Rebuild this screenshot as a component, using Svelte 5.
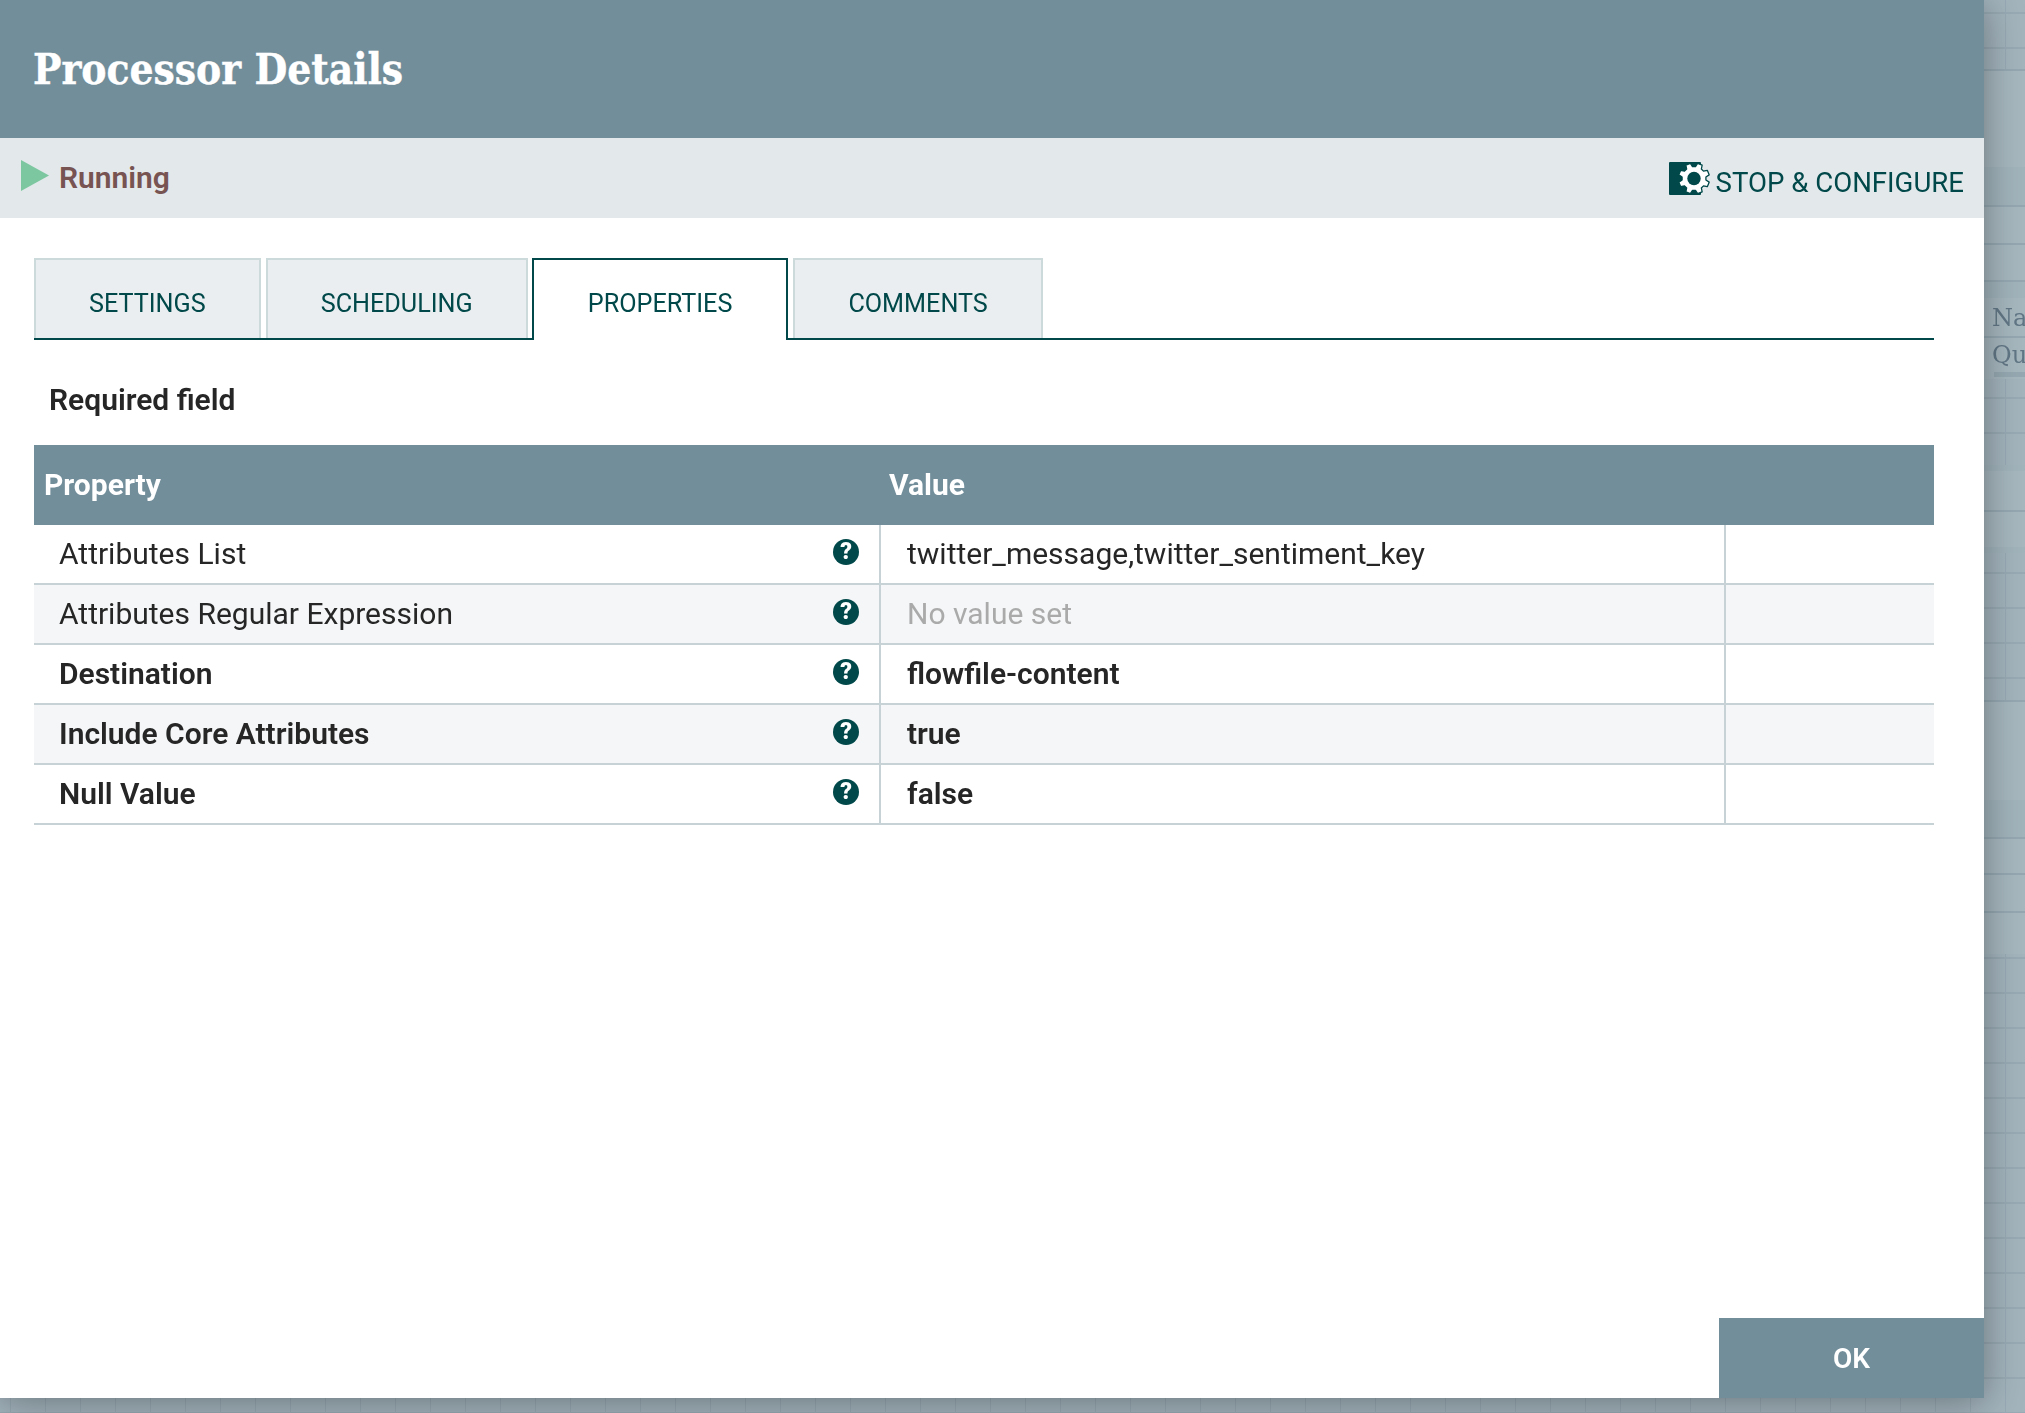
<script>
  // canvas nodes behind the dialog: only a sliver of each shows at the right edge
  const nodes = [
    { top: 69, height: 310, rows: [0, 136, 174, 211, 267], bands: [{ top: 98, height: 38 }, { top: 211, height: 18 }] },
    { top: 465, height: 88, rows: [45], bands: [{ top: 0, height: 6 }, { top: 82, height: 6 }] },
    { top: 700, height: 254, rows: [0, 137, 173, 211], bands: [{ top: 100, height: 37 }] },
  ]

  const tabs = [
    { label: 'SETTINGS' },
    { label: 'SCHEDULING' },
    { label: 'PROPERTIES', active: true },
    { label: 'COMMENTS' },
  ]

  const properties = [
    { name: 'Attributes List', value: 'twitter_message,twitter_sentiment_key' },
    { name: 'Attributes Regular Expression', value: 'No value set', unset: true },
    { name: 'Destination', value: 'flowfile-content', required: true },
    { name: 'Include Core Attributes', value: 'true', required: true },
    { name: 'Null Value', value: 'false', required: true },
  ]

  function gearPath(cx, cy, outer, inner, teeth) {
    const step = (Math.PI * 2) / teeth
    const pts = []
    for (let i = 0; i < teeth; i++) {
      const a = i * step + step / 2
      pts.push([a - step * 0.34, inner], [a - step * 0.2, outer], [a + step * 0.2, outer], [a + step * 0.34, inner])
    }
    return 'M' + pts.map(([a, r]) => `${(cx + Math.cos(a) * r).toFixed(2)} ${(cy + Math.sin(a) * r).toFixed(2)}`).join('L') + 'Z'
  }
</script>

<div class="canvas">
  {#each nodes as node}
    <div class="node" style="top: {node.top}px; height: {node.height}px">
      {#each node.bands as band}
        <div class="band" style="top: {band.top}px; height: {band.height}px"></div>
      {/each}
      {#each node.rows as y}
        <div class="rule" style="top: {y}px"></div>
      {/each}
    </div>
  {/each}
  <div class="node-text name">Name</div>
  <div class="node-text queue">Queued</div>
  <div class="node-bar"></div>
</div>

<div class="dialog">
  <header class="title">Processor Details</header>

  <div class="status">
    <div class="state">
      <svg class="play" viewBox="0 0 28 31" width="28" height="31" aria-hidden="true">
        <path d="M0 0L28 15.5L0 31Z" />
      </svg>
      <span>Running</span>
    </div>
    <div class="stop">
      <svg class="stop-icon" viewBox="0 0 42 34" width="42" height="34" aria-hidden="true">
        <rect x="0" y="0" width="32" height="33" rx="1" fill="#004849" />
        <path d={gearPath(25, 16.5, 15.6, 12, 8)} fill="#fff" stroke="#004849" stroke-width="1.3" stroke-linejoin="round" />
        <circle cx="25" cy="16.5" r="6.7" fill="#004849" />
      </svg>
      <span class="stop-label">STOP &amp; CONFIGURE</span>
    </div>
  </div>

  <div class="body">
    <nav class="tabs">
      {#each tabs as tab}
        <div class="tab" class:active={tab.active}>{tab.label}</div>
      {/each}
    </nav>

    <div class="required">Required field</div>

    <div class="table">
      <div class="thead">
        <div>Property</div>
        <div>Value</div>
        <div></div>
      </div>
      {#each properties as prop}
        <div class="row" class:required-row={prop.required}>
          <div class="cell name-cell">
            <span>{prop.name}</span>
            <span class="help">?</span>
          </div>
          <div class="cell value-cell" class:unset={prop.unset}>{prop.value}</div>
          <div class="cell"></div>
        </div>
      {/each}
    </div>
  </div>

  <footer class="footer">
    <div class="ok">OK</div>
  </footer>
</div>

<style>
  :global(body) {
    margin: 0;
    background: #a3b4bd;
    font-family: Roboto, "Liberation Sans", sans-serif;
    overflow: hidden;
  }

  .canvas {
    position: fixed;
    inset: 0;
    background-color: #a3b4bd;
    background-image:
      repeating-linear-gradient(90deg, transparent 0 34px, #98aab4 34px 36px),
      repeating-linear-gradient(0deg, transparent 0 33px, #98aab4 33px 35px);
    background-size: 35px 100%, 100% 35px;
    background-repeat: repeat;
    background-position: 11px 0, 0 12px;
  }

  .node {
    position: absolute;
    left: 1900px;
    right: 0;
    background: #a6b7be;
  }

  .band {
    position: absolute;
    left: 0;
    right: 0;
    background: #a1b3bb;
  }

  .rule {
    position: absolute;
    left: 0;
    right: 0;
    height: 2px;
    background: #95a8b2;
  }

  .node-text {
    position: absolute;
    left: 1992px;
    font-family: "DejaVu Serif", serif;
    font-size: 24px;
    line-height: 30px;
    color: #627786;
    white-space: nowrap;
  }

  .name { top: 303px; }
  .queue { top: 340px; }

  .node-bar {
    position: absolute;
    left: 1994px;
    right: 0;
    top: 372px;
    height: 5px;
    background: #96a9b2;
  }

  .dialog {
    position: absolute;
    top: 0;
    left: 0;
    width: 1984px;
    height: 1398px;
    background: #fff;
    display: flex;
    flex-direction: column;
    box-shadow: 0 4px 36px rgba(0, 0, 0, 0.36);
  }

  .title {
    height: 138px;
    flex: none;
    background: #728e9b;
    color: #fff;
    display: flex;
    align-items: center;
    padding-left: 33px;
    font-family: "DejaVu Serif Condensed", "DejaVu Serif", serif;
    font-weight: 700;
    font-size: 42px;
    -webkit-text-stroke: 0.4px #fff;
  }

  .status {
    height: 80px;
    flex: none;
    background: #e3e8eb;
    display: flex;
    justify-content: space-between;
    align-items: flex-start;
    padding: 0 20px 0 21px;
  }

  .state {
    display: flex;
    align-items: flex-start;
    gap: 10px;
    padding-top: 22px;
    color: #775351;
    font-size: 30px;
    font-weight: 600;
    line-height: 36px;
  }

  .play {
    fill: #7dc7a0;
  }

  .stop {
    display: flex;
    align-items: flex-start;
    gap: 5px;
    padding-top: 24px;
    color: #004849;
    font-size: 27.6px;
    line-height: 36px;
  }

  .stop-label {
    margin-top: 3px;
  }

  .body {
    flex: 1;
    padding: 40px 50px 0 34px;
    min-height: 0;
  }

  .tabs {
    display: flex;
    gap: 5px;
    height: 82px;
    box-sizing: border-box;
    border-bottom: 2px solid #004849;
  }

  .tab {
    height: 80px;
    box-sizing: border-box;
    padding: 8px 53px 0;
    display: flex;
    align-items: center;
    background: #eaeef0;
    border: 2px solid #ccdadb;
    border-bottom: 0;
    color: #004849;
    font-size: 25.2px;
  }

  .tab.active {
    height: 82px;
    margin-left: -1px;
    padding: 8px 54px 2px;
    background: #fff;
    border-color: #004849;
  }

  .required {
    margin: 41px 0 0 15px;
    height: 37px;
    line-height: 37px;
    color: #262626;
    font-size: 30px;
    font-weight: 600;
  }

  .table {
    margin-top: 27px;
  }

  .thead,
  .row {
    display: grid;
    grid-template-columns: 847px 845px 1fr;
  }

  .thead {
    height: 80px;
    align-items: center;
    background: #728e9b;
    color: #fff;
    font-size: 30px;
    font-weight: 700;
  }

  .thead > div {
    padding-left: 10px;
    padding-bottom: 2px;
  }

  .thead > div:nth-child(2) {
    padding-left: 8px;
  }

  .row {
    height: 60px;
    box-sizing: border-box;
    border-bottom: 2px solid #c7d2d7;
    color: #262626;
    font-size: 30px;
  }

  .row:nth-child(odd) {
    background: #f4f6f7;
  }

  .required-row {
    font-weight: 600;
  }

  .cell {
    display: flex;
    align-items: center;
    box-sizing: border-box;
    padding-bottom: 2px;
  }

  .cell:not(:last-child) {
    border-right: 2px solid #c7d2d7;
  }

  .name-cell {
    justify-content: space-between;
    padding-left: 25px;
    padding-right: 20px;
  }

  .value-cell {
    padding-left: 26px;
  }

  .value-cell.unset {
    color: #aaa;
  }

  .help {
    width: 26px;
    height: 26px;
    margin-top: -3px;
    border-radius: 50%;
    background: #004849;
    color: #fff;
    font-size: 23px;
    font-weight: 900;
    line-height: 26px;
    text-align: center;
  }

  .footer {
    flex: none;
    display: flex;
    justify-content: flex-end;
  }

  .ok {
    width: 265px;
    height: 80px;
    background: #728e9b;
    color: #fff;
    font-size: 28px;
    font-weight: 600;
    display: flex;
    align-items: center;
    justify-content: center;
  }
</style>
